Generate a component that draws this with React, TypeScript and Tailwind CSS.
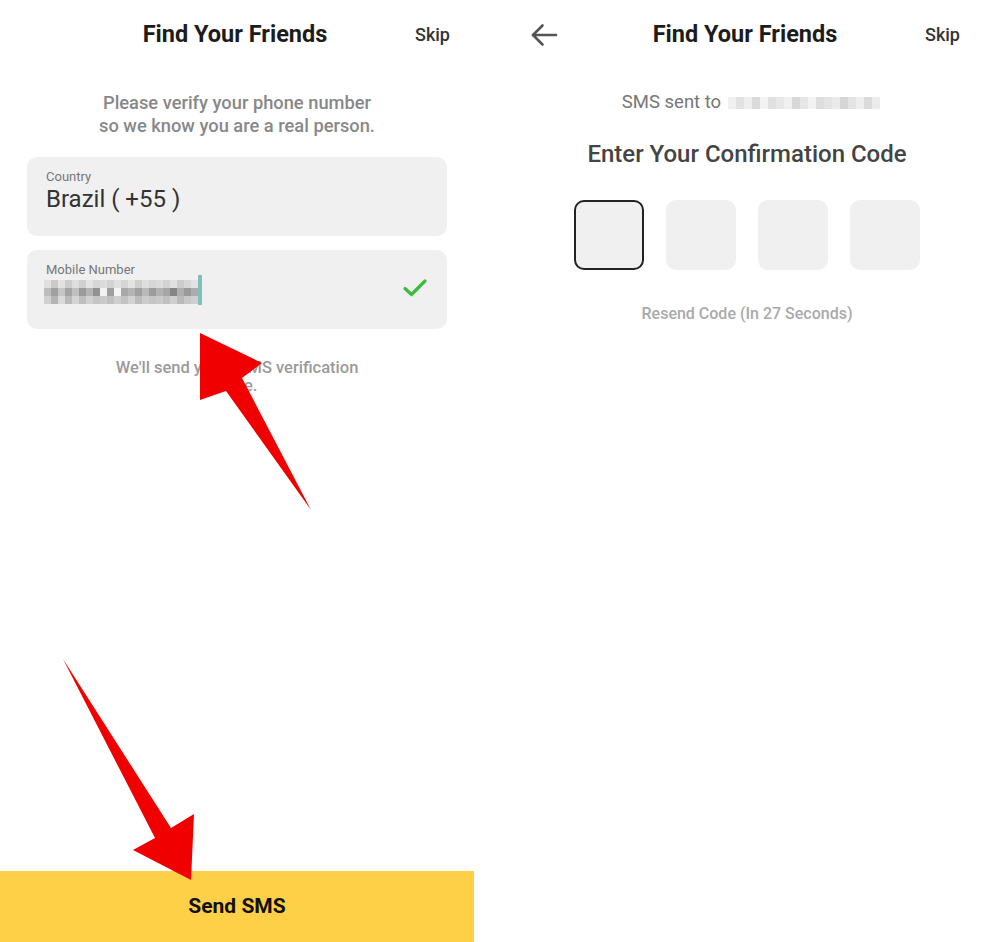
import React from "react";

const font = { fontFamily: "Roboto, 'Noto Sans', Arial, sans-serif" };

// pixelated (blurred) phone number, 3 rows of blocks
const numberRows = [
  ["bg-[#e0e0e0]", "bg-[#cacaca]", "bg-[#e2e2e2]", "bg-[#cccccc]", "bg-[#dedede]", "bg-[#d0d0d0]", "bg-[#e4e4e4]", "bg-[#d6d6d6]", "bg-[#dcdcdc]", "bg-[#d2d2d2]", "bg-[#e0e0e0]", "bg-[#d4d4d4]", "bg-[#e2e2e2]", "bg-[#cecece]", "bg-[#dedede]", "bg-[#d6d6d6]", "bg-[#dcdcdc]", "bg-[#d2d2d2]", "bg-[#e0e0e0]", "bg-[#cccccc]", "bg-[#d8d8d8]", "bg-[#e2e2e2]"],
  ["bg-[#bcbcbc]", "bg-[#a0a0a0]", "bg-[#c6c6c6]", "bg-[#a4a4a4]", "bg-[#c0c0c0]", "bg-[#9a9a9a]", "bg-[#b4b4b4]", "bg-[#929292]", "bg-[#f2f2f2]", "bg-[#9e9e9e]", "bg-[#f4f4f4]", "bg-[#a8a8a8]", "bg-[#b4b4b4]", "bg-[#a0a0a0]", "bg-[#b8b8b8]", "bg-[#9c9c9c]", "bg-[#b2b2b2]", "bg-[#a6a6a6]", "bg-[#858585]", "bg-[#aeaeae]", "bg-[#9a9a9a]", "bg-[#acacac]"],
  ["bg-[#d0d0d0]", "bg-[#b4b4b4]", "bg-[#dadada]", "bg-[#bababa]", "bg-[#d4d4d4]", "bg-[#bebebe]", "bg-[#d0d0d0]", "bg-[#c4c4c4]", "bg-[#cacaca]", "bg-[#c0c0c0]", "bg-[#cecece]", "bg-[#c2c2c2]", "bg-[#d2d2d2]", "bg-[#bcbcbc]", "bg-[#cccccc]", "bg-[#c4c4c4]", "bg-[#cacaca]", "bg-[#c0c0c0]", "bg-[#cecece]", "bg-[#bababa]", "bg-[#c8c8c8]", "bg-[#d0d0d0]"],
];

const smsBlur = ["bg-[#f0f0f0]", "bg-[#e2e2e2]", "bg-[#eeeeee]", "bg-[#dcdcdc]", "bg-[#f2f2f2]", "bg-[#e0e0e0]", "bg-[#e8e8e8]", "bg-[#f0f0f0]", "bg-[#d8d8d8]", "bg-[#e6e6e6]", "bg-[#f2f2f2]", "bg-[#dedede]", "bg-[#e4e4e4]", "bg-[#eaeaea]", "bg-[#d6d6d6]", "bg-[#e4e4e4]", "bg-[#eeeeee]", "bg-[#dcdcdc]", "bg-[#ececec]"];

function Header({ back }: { back?: boolean }) {
  return (
    <div className="grid h-[70px] grid-cols-[1fr_auto_1fr] items-center px-[20px] pr-[24px]">
      <div>
        {back && (
          <svg width="28" height="24" viewBox="0 0 28 24" fill="none" stroke="#555" strokeWidth="2.6" strokeLinecap="round" strokeLinejoin="round">
            <path d="M26 12H3" />
            <path d="M12.5 2.5L3 12l9.5 9.5" />
          </svg>
        )}
      </div>
      <h1 className="text-[23.5px] font-bold text-[#1c1c1c]">Find Your Friends</h1>
      <div className="text-right text-[18px] font-medium leading-[26px] text-[#333]">Skip</div>
    </div>
  );
}

function FindFriends() {
  return (
    <div className="flex h-full w-[474px] flex-col">
      <Header />
      <p className="mt-[21px] text-center text-[18.3px] font-medium leading-[23px] text-[#888]">
        Please verify your phone number
        <br />
        so we know you are a real person.
      </p>

      <div className="mx-[27px] mt-[20px] flex h-[79px] flex-col rounded-[10px] bg-[#f0f0f0] px-[19px] pt-[12px]">
        <span className="text-[13px] leading-[16px] text-[#777]">Country</span>
        <span className="text-[24px] leading-[28px] text-[#333]">Brazil ( +55 )</span>
      </div>

      <div className="mx-[27px] mt-[14px] flex h-[79px] items-start justify-between rounded-[10px] bg-[#f0f0f0] pl-[17px] pr-[19px] pt-[12px]">
        <div className="flex flex-col">
          <span className="pl-[2px] text-[13px] leading-[16px] text-[#777]">Mobile Number</span>
          <div className="mt-[-3px] flex items-end">
            <div className="flex flex-col">
              {numberRows.map((row, i) => (
                <div key={i} className="flex">
                  {row.map((c, j) => (
                    <div key={j} className={`h-[8px] w-[7px] ${c}`} />
                  ))}
                </div>
              ))}
            </div>
            <div className="mb-[-1px] h-[30px] w-[4px] bg-[#7fc1b6]" />
          </div>
        </div>
        <svg className="mt-[15px]" width="26" height="22" viewBox="0 0 26 22" fill="none" stroke="#3dbb3d" strokeWidth="3.2" strokeLinecap="round" strokeLinejoin="round">
          <path d="M3 11.5l6.5 6L23 4" />
        </svg>
      </div>

      <p className="mt-[30px] text-center text-[16.5px] font-medium leading-[18px] text-[#9a9a9a]">
        We'll send you a SMS verification
        <br />
        code.
      </p>

      <button className="mt-auto flex h-[71px] w-full items-center justify-center bg-[#fdd047] text-[21px] font-bold text-[#111]">
        Send SMS
      </button>
    </div>
  );
}

function ConfirmCode() {
  return (
    <div className="flex h-full w-[474px] flex-col">
      <Header back />
      <div className="mt-[21px] flex items-center justify-center gap-[7px] pl-[8px]">
        <span className="text-[18.5px] leading-[23px] text-[#777]">SMS sent to</span>
        <div className="flex h-[12px]">
          {smsBlur.map((c, i) => (
            <div key={i} className={`h-[12px] w-[8px] ${c}`} />
          ))}
        </div>
      </div>
      <h2 className="mt-[25px] text-center text-[24px] font-medium leading-[30px] text-[#444]">
        Enter Your Confirmation Code
      </h2>
      <div className="mt-[31px] flex justify-center gap-[22px]">
        <div className="h-[70px] w-[70px] rounded-[10px] border-2 border-[#222] bg-[#f0f0f0]" />
        <div className="h-[70px] w-[70px] rounded-[10px] bg-[#f0f0f0]" />
        <div className="h-[70px] w-[70px] rounded-[10px] bg-[#f0f0f0]" />
        <div className="h-[70px] w-[70px] rounded-[10px] bg-[#f0f0f0]" />
      </div>
      <p className="mt-[32px] text-center text-[16px] font-medium leading-[24px] text-[#aaa]">
        Resend Code (In 27 Seconds)
      </p>
    </div>
  );
}

export default function App() {
  return (
    <div className="relative flex h-[942px] w-[984px] justify-between overflow-hidden bg-white" style={font}>
      <FindFriends />
      <ConfirmCode />
      {/* red annotation arrows */}
      <svg className="pointer-events-none absolute left-0 top-0" width="984" height="942" viewBox="0 0 984 942">
        <polygon fill="#f00000" points="200,333 262,363 242,378 311,510 226,391 200,400" />
        <polygon fill="#f00000" points="63,659 171,828 194,814 191,880 133,850 155,838" />
      </svg>
    </div>
  );
}
